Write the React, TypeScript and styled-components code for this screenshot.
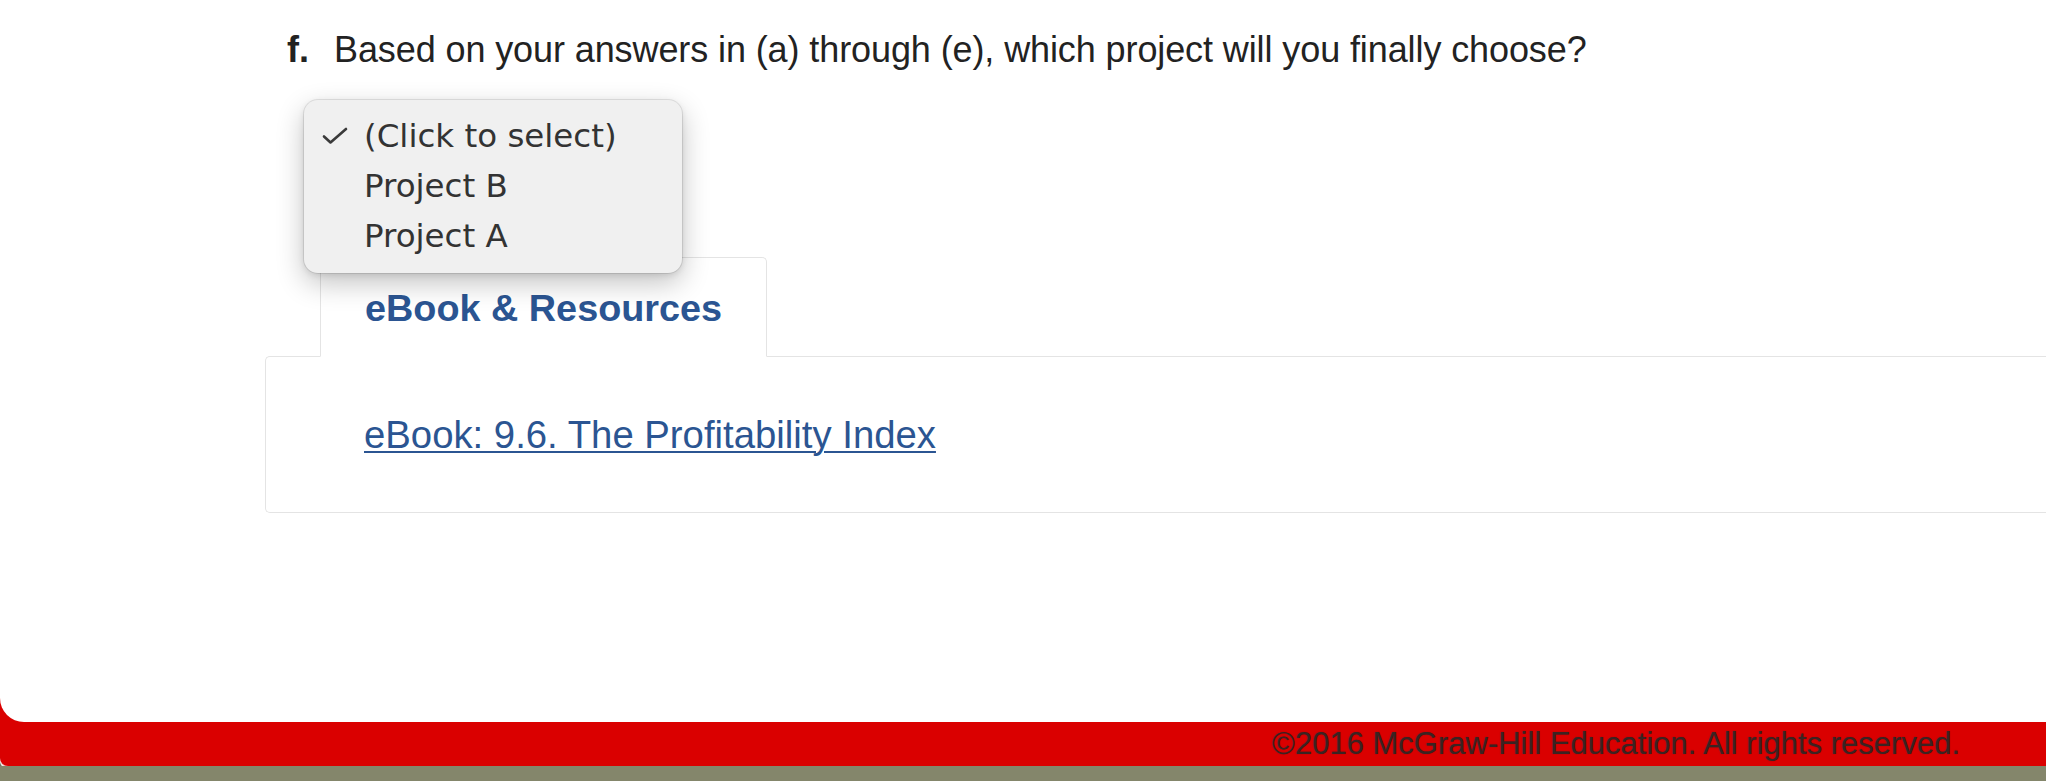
import React from "react";
import styled, { createGlobalStyle } from "styled-components";

const GlobalStyle = createGlobalStyle`
  html, body {
    margin: 0;
    padding: 0;
    background: #84866b;
  }
  body {
    font-family: "Liberation Sans", Arial, Helvetica, sans-serif;
    overflow: hidden;
  }
`;

const Frame = styled.div`
  width: 2046px;
  background: #da0000;
  border-bottom-left-radius: 8px;
  box-shadow: 0 1px 0 #f4c9c9, 0 3px 0 #eef2ef, 0 5px 3px rgba(70, 78, 58, 0.7);
`;

const Main = styled.main`
  position: relative;
  height: 722px;
  box-sizing: border-box;
  background: #ffffff;
  border-bottom-left-radius: 24px;
  padding: 29px 0 0 265px;
  overflow: hidden;
`;

const Question = styled.p`
  display: flex;
  margin: 0 0 0 22px;
  font-size: 36px;
  line-height: 42px;
  color: #222222;
  letter-spacing: -0.1px;
`;

const Label = styled.b`
  width: 47px;
  flex: none;
  font-weight: 700;
`;

const SelectArea = styled.div`
  position: relative;
  height: 186px;
  margin-left: 39px;
`;

const Menu = styled.ul`
  position: absolute;
  z-index: 5;
  top: 29px;
  left: 0;
  width: 378px;
  height: 173px;
  box-sizing: border-box;
  margin: 0;
  padding: 11px 0 12px;
  list-style: none;
  background: #f0f0f0;
  border-radius: 14px;
  box-shadow: 0 0 0 1px rgba(0, 0, 0, 0.09), 0 10px 28px rgba(0, 0, 0, 0.24),
    0 2px 6px rgba(0, 0, 0, 0.1);
`;

const Item = styled.li`
  display: flex;
  align-items: center;
  height: 50px;
  font-family: "DejaVu Sans", "Noto Sans", sans-serif;
  font-size: 32.5px;
  color: #333333;
`;

const CheckSlot = styled.span`
  width: 60px;
  flex: none;
  display: flex;
  align-items: center;
  padding-left: 18px;
  box-sizing: border-box;
`;

const Tabs = styled.div`
  display: flex;
  margin-left: 55px;
`;

const Tab = styled.div`
  position: relative;
  z-index: 1;
  padding: 28px 44px 26px;
  margin-bottom: -1px;
  background: #ffffff;
  border: 1px solid #e4e4e4;
  border-bottom-color: #ffffff;
  border-radius: 5px 5px 0 0;
  font-size: 37.8px;
  line-height: 44px;
  font-weight: 700;
  color: #2b5592;
`;

const Panel = styled.section`
  height: 157px;
  box-sizing: border-box;
  padding: 56px 0 0 98px;
  border: 1px solid #e4e4e4;
  border-right: none;
  border-radius: 5px 0 0 5px;
`;

const Link = styled.a`
  font-size: 38.3px;
  line-height: 44px;
  color: #2b5592;
  text-decoration: underline;
  text-decoration-thickness: 2px;
  text-underline-offset: 3px;
`;

const Footer = styled.footer`
  display: flex;
  justify-content: flex-end;
  align-items: center;
  height: 44px;
  padding-right: 86px;
  font-size: 31px;
  color: #3a2322;
  text-shadow: 0 0 1px rgba(40, 20, 20, 0.5);
`;

const Check = () => (
  <svg width="26" height="18" viewBox="0 0 26 18" fill="none">
    <path
      d="M2 9.5 L8.5 15.5 L24 2"
      stroke="#3a3a3a"
      strokeWidth="2.6"
      strokeLinecap="round"
      strokeLinejoin="round"
    />
  </svg>
);

const options = [
  { label: "(Click to select)", selected: true },
  { label: "Project B", selected: false },
  { label: "Project A", selected: false },
];

export default function App() {
  return (
    <>
      <GlobalStyle />
      <Frame>
        <Main>
          <Question>
            <Label>f.</Label>
            <span>Based on your answers in (a) through (e), which project will you finally choose?</span>
          </Question>
          <SelectArea>
            <Menu role="listbox">
              {options.map((o) => (
                <Item key={o.label} role="option" aria-selected={o.selected}>
                  <CheckSlot>{o.selected && <Check />}</CheckSlot>
                  {o.label}
                </Item>
              ))}
            </Menu>
          </SelectArea>
          <Tabs>
            <Tab>eBook &amp; Resources</Tab>
          </Tabs>
          <Panel>
            <Link href="#">eBook: 9.6. The Profitability Index</Link>
          </Panel>
        </Main>
        <Footer>©2016 McGraw-Hill Education. All rights reserved.</Footer>
      </Frame>
    </>
  );
}
